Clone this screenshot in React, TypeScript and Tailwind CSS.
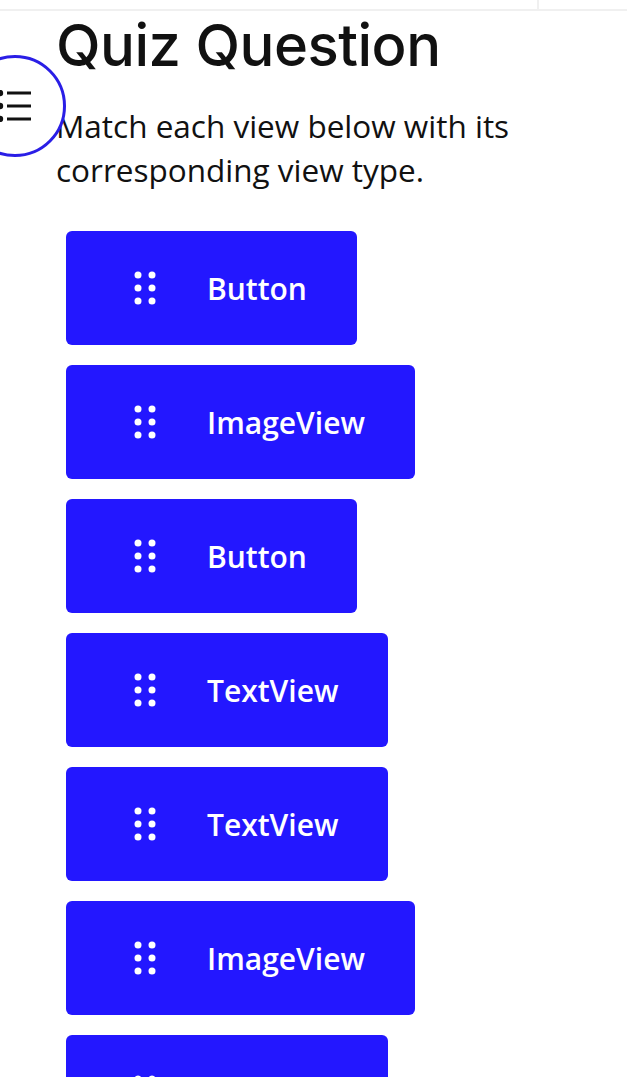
const items = ["Button", "ImageView", "Button", "TextView", "TextView", "ImageView", "TextView"];

const DragDots = () => (
  <svg width="24" height="40" viewBox="0 0 24 40" className="shrink-0">
    {[7, 20, 33].map((y) =>
      [5, 19].map((x) => <circle key={`${x}-${y}`} cx={x} cy={y} r="3.5" fill="white" />)
    )}
  </svg>
);

export default function App() {
  return (
    <div className="relative w-[627px] h-[1077px] overflow-hidden bg-white">
      {/* top bar remnant */}
      <div className="flex h-[11px] border-b-2 border-[#f0f0f0]">
        <div className="w-[537px]" />
        <div className="w-[2px] bg-[#f0f0f0]" />
      </div>

      {/* floating menu toggle */}
      <button className="absolute left-[-36px] top-[55px] w-[102px] h-[102px] rounded-full border-[3px] border-[#2a1ee6] bg-white flex items-center justify-end pr-[30px]">
        <svg width="36" height="32" viewBox="0 0 36 32">
          <circle cx="3" cy="3" r="3.2" fill="#111" />
          <circle cx="3" cy="16" r="3.2" fill="#111" />
          <circle cx="3" cy="29" r="3.2" fill="#111" />
          <rect x="10" y="1.5" width="24" height="3" fill="#111" />
          <rect x="10" y="14.5" width="24" height="3" fill="#111" />
          <rect x="10" y="27.5" width="24" height="3" fill="#111" />
        </svg>
      </button>

      <div className="pl-[56px] pt-[4px]">
        <h1 className="text-[58px] leading-[60px] text-[#111] font-medium tracking-[-0.5px] font-['Inter',sans-serif]">
          Quiz Question
        </h1>
        <p className="mt-[29px] text-[31.5px] leading-[44px] text-[#111] font-medium font-['Open_Sans',sans-serif] w-[540px]">
          Match each view below with its corresponding view type.
        </p>

        <div className="mt-[39px] ml-[10px] flex flex-col items-start gap-[20px]">
          {items.map((label, i) => (
            <div
              key={i}
              className="h-[114px] shrink-0 flex items-center gap-[50px] pl-[67px] pr-[50px] rounded-[6px] bg-[#2317ff] text-white"
            >
              <DragDots />
              <span className="text-[30px] font-semibold font-['Open_Sans',sans-serif]">{label}</span>
            </div>
          ))}
        </div>
      </div>
    </div>
  );
}
